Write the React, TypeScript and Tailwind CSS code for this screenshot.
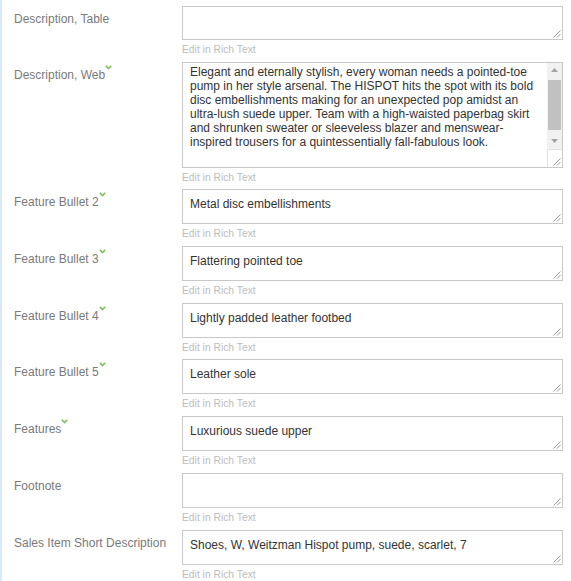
import React from "react";

type Field = {
  label: string;
  flag?: boolean;
  value?: string;
};

const fields: Field[] = [
  { label: "Feature Bullet 2", flag: true, value: "Metal disc embellishments" },
  { label: "Feature Bullet 3", flag: true, value: "Flattering pointed toe" },
  { label: "Feature Bullet 4", flag: true, value: "Lightly padded leather footbed" },
  { label: "Feature Bullet 5", flag: true, value: "Leather sole" },
  { label: "Features", flag: true, value: "Luxurious suede upper" },
  { label: "Footnote" },
  {
    label: "Sales Item Short Description",
    value: "Shoes, W, Weitzman Hispot pump, suede, scarlet, 7",
  },
];

const webLines = [
  "Elegant and eternally stylish, every woman needs a pointed-toe",
  "pump in her style arsenal. The HISPOT hits the spot with its bold",
  "disc embellishments making for an unexpected pop amidst an",
  "ultra-lush suede upper. Team with a high-waisted paperbag skirt",
  "and shrunken sweater or sleeveless blazer and menswear-",
  "inspired trousers for a quintessentially fall-fabulous look.",
];

const Chevron = () => (
  <svg width="7" height="5" viewBox="0 0 7 5" className="-mt-[3px] inline-block align-top">
    <path d="M0.8 0.8 L3.5 3.6 L6.2 0.8" fill="none" stroke="#7dc05a" strokeWidth="1.6" />
  </svg>
);

const Grip = () => (
  <svg width="10" height="10" viewBox="0 0 10 10" className="absolute right-[1px] bottom-[1px]">
    <path d="M9.5 2.5 L2.5 9.5 M9.5 6 L6 9.5" stroke="#999" strokeWidth="1" />
  </svg>
);

const Label = ({ text, flag }: { text: string; flag?: boolean }) => (
  <div className="w-[180px] shrink-0 pl-[12px] pt-[6px] text-[12px] leading-[14px] text-[#7a7a7a]">
    {text}
    {flag && <Chevron />}
  </div>
);

const EditLink = () => (
  <div className="pt-[2px] pb-[3.7px] text-[10.3px] leading-[16px] text-[#bdbdbd]">Edit in Rich Text</div>
);

const Box = ({ value, h = "h-[35px]" }: { value?: string; h?: string }) => (
  <div className={`relative w-[381px] ${h} border border-[#c9c9c9] bg-white px-[7px] pt-[7px] text-[12px] leading-[14px] text-[#333]`}>
    {value}
    <Grip />
  </div>
);

const Row = ({ label, flag, children }: { label: string; flag?: boolean; children: React.ReactNode }) => (
  <div className="flex">
    <Label text={label} flag={flag} />
    <div className="flex flex-col">
      {children}
      <EditLink />
    </div>
  </div>
);

const Arrow = ({ up }: { up?: boolean }) => (
  <div className="flex h-[15px] items-center justify-center">
    <svg width="7" height="4" viewBox="0 0 7 4">
      <path d={up ? "M0 4 L3.5 0 L7 4 Z" : "M0 0 L3.5 4 L7 0 Z"} fill="#a3a3a3" />
    </svg>
  </div>
);

const WebBox = () => (
  <div className="relative h-[106px] w-[381px] border border-[#c9c9c9] bg-white pl-[7px] pt-[2px] text-[12px] leading-[14px] text-[#333]">
    {webLines.map((l) => (
      <div key={l} className="whitespace-nowrap">
        {l}
      </div>
    ))}
    <div className="absolute right-0 top-0 flex h-full w-[15px] flex-col">
      <div className="flex h-[86px] flex-col bg-[#f1f1f1]">
        <Arrow up />
        <div className="flex-1 px-[1px] pt-[2px] pb-[3px]">
          <div className="h-[50px] bg-[#c1c1c1]" />
        </div>
        <Arrow />
      </div>
      <div className="relative flex-1 border-l border-t border-[#e3e3e3] bg-white">
        <Grip />
      </div>
    </div>
  </div>
);

export default function App() {
  return (
    <div
      className="min-h-screen border-l-2 border-[#dbe9f5] bg-white pt-[6px]"
      style={{ fontFamily: '"Liberation Sans", Arial, sans-serif' }}
    >
      <Row label="Description, Table">
        <Box h="h-[34px]" />
      </Row>
      <Row label="Description, Web" flag>
        <WebBox />
      </Row>
      {fields.map((f) => (
        <Row key={f.label} label={f.label} flag={f.flag}>
          <Box value={f.value} />
        </Row>
      ))}
    </div>
  );
}
